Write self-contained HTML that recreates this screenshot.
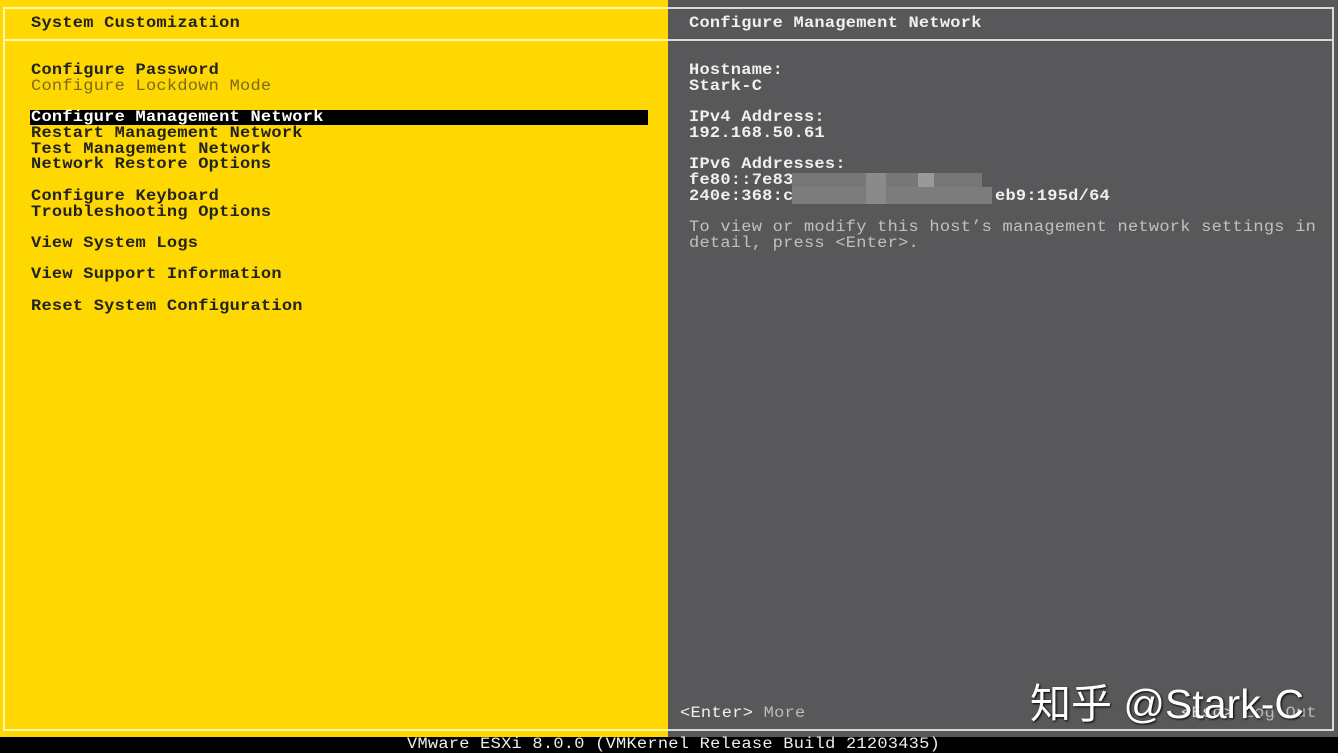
<!DOCTYPE html>
<html><head><meta charset="utf-8"><style>
body{margin:0;width:1338px;height:753px;overflow:hidden;background:#000;position:relative;font-family:"Liberation Mono",monospace;}
.y{position:absolute;left:0;top:0;width:668px;height:737px;background:#fed800;}
.g{position:absolute;left:668px;top:0;width:670px;height:737px;background:#58585a;}
.l{position:absolute;background:#fff6b0;}
.lg{position:absolute;background:#d8d8d8;}
.t{position:absolute;font-size:17px;line-height:16px;white-space:pre;font-weight:bold;letter-spacing:0.25px;transform:scaleY(0.9);transform-origin:left top;}
.k{color:#222;}
.d{color:#7a6a20;font-weight:normal;}
.w{color:#f0f0f0;}
.lt{color:#c0c0c0;font-weight:normal;}
</style></head><body>
<div class="y"></div><div class="g"></div>
<div class="l" style="left:3px;top:7px;width:665px;height:2px"></div>
<div class="l" style="left:3px;top:7px;width:2px;height:724px"></div>
<div class="l" style="left:3px;top:39px;width:665px;height:2px"></div>
<div class="l" style="left:3px;top:729px;width:665px;height:2px"></div>
<div class="lg" style="left:668px;top:7px;width:666px;height:2px"></div>
<div class="lg" style="left:668px;top:39px;width:666px;height:2px"></div>
<div class="lg" style="left:1332px;top:7px;width:2px;height:724px"></div>
<div class="lg" style="left:668px;top:729px;width:666px;height:2px"></div>

<div class="t k" style="left:31px;top:17px">System Customization</div>
<div class="t k" style="left:31px;top:64px">Configure Password</div>
<div class="t d" style="left:31px;top:80px">Configure Lockdown Mode</div>
<div style="position:absolute;left:30px;top:110px;width:618px;height:15px;background:#000"></div>
<div class="t" style="left:31px;top:111px;color:#fff">Configure Management Network</div>
<div class="t k" style="left:31px;top:127px">Restart Management Network</div>
<div class="t k" style="left:31px;top:143px">Test Management Network</div>
<div class="t k" style="left:31px;top:158px">Network Restore Options</div>
<div class="t k" style="left:31px;top:190px">Configure Keyboard</div>
<div class="t k" style="left:31px;top:206px">Troubleshooting Options</div>
<div class="t k" style="left:31px;top:237px">View System Logs</div>
<div class="t k" style="left:31px;top:268px">View Support Information</div>
<div class="t k" style="left:31px;top:300px">Reset System Configuration</div>

<div class="t w" style="left:689px;top:17px">Configure Management Network</div>
<div class="t w" style="left:689px;top:64px">Hostname:</div>
<div class="t w" style="left:689px;top:80px">Stark-C</div>
<div class="t w" style="left:689px;top:111px">IPv4 Address:</div>
<div class="t w" style="left:689px;top:127px">192.168.50.61</div>
<div class="t w" style="left:689px;top:158px">IPv6 Addresses:</div>
<div class="t w" style="left:689px;top:174px">fe80::7e83</div>
<div class="t w" style="left:689px;top:190px">240e:368:c</div>
<div class="t w" style="left:995px;top:190px">eb9:195d/64</div>
<div style="position:absolute;left:792px;top:173px;width:190px;height:14px;background:#777"></div>
<div style="position:absolute;left:792px;top:187px;width:200px;height:17px;background:#7c7c7c"></div>
<div style="position:absolute;left:866px;top:173px;width:20px;height:31px;background:#8a8a8a"></div>
<div style="position:absolute;left:918px;top:173px;width:16px;height:14px;background:#999"></div>
<div class="t lt" style="left:689px;top:221px">To view or modify this host’s management network settings in</div>
<div class="t lt" style="left:689px;top:237px">detail, press &lt;Enter&gt;.</div>
<div class="t" style="left:680px;top:707px;color:#eee;font-weight:normal">&lt;Enter&gt; <span style="color:#bbb">More</span></div>
<div class="t" style="left:1181px;top:707px;color:#ddd;font-weight:normal">&lt;Esc&gt; <span style="color:#bbb">Log Out</span></div>
<div style="position:absolute;left:1030px;top:670px;font-family:'Liberation Sans','Noto Sans CJK SC',sans-serif;font-size:41px;color:#fff;text-shadow:1px 1px 2px #000;white-space:nowrap">知乎 @Stark-C</div>
<div class="t" style="left:407px;top:738px;color:#eee;font-weight:normal">VMware ESXi 8.0.0 (VMKernel Release Build 21203435)</div>
</body></html>
